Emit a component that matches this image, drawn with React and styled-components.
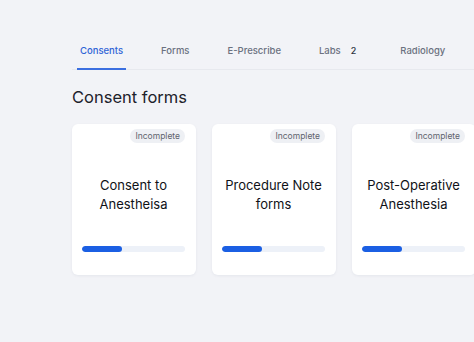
import styled, { createGlobalStyle } from "styled-components";

const GlobalStyle = createGlobalStyle`
  html, body {
    margin: 0;
    padding: 0;
    background: #f2f3f7;
    font-family: Inter, "Noto Sans", sans-serif;
    -webkit-font-smoothing: antialiased;
  }
`;

const Page = styled.div`
  width: 474px;
  height: 342px;
  box-sizing: border-box;
  padding: 36px 0 0 72px;
  overflow: hidden;
  background: #f2f3f7;
`;

const TabBar = styled.div`
  display: flex;
  align-items: flex-end;
  gap: 32px;
  padding-left: 5px;
  border-bottom: 1px solid #e7e9ee;
  width: 600px;
`;

const Tab = styled.div`
  display: flex;
  align-items: center;
  gap: 10px;
  padding: 8px 3px 10px;
  margin-bottom: -1px;
  font-size: 9.5px;
  line-height: 14px;
  font-weight: 500;
  color: ${(p) => (p.active ? "#2f63d6" : "#6b7180")};
  border-bottom: 2px solid ${(p) => (p.active ? "#3b6fe0" : "transparent")};
  white-space: nowrap;
`;

const Count = styled.span`
  padding-right: 6px;
  font-size: 9px;
  font-weight: 500;
  color: #2d3340;
`;

const Heading = styled.h2`
  margin: 16px 0 16px;
  font-size: 16.5px;
  line-height: 22px;
  font-weight: 400;
  color: #1d222b;
`;

const CardRow = styled.div`
  display: flex;
  gap: 16px;
`;

const Card = styled.div`
  flex: 0 0 124px;
  height: 151px;
  box-sizing: border-box;
  display: flex;
  flex-direction: column;
  padding: 5px 11px 0 10px;
  background: #fff;
  border-radius: 6px;
  box-shadow: 0 1px 3px rgba(20, 30, 60, 0.06);
`;

const Badge = styled.span`
  align-self: flex-end;
  padding: 0 5px;
  height: 14px;
  line-height: 14px;
  border-radius: 7px;
  background: #eef0f4;
  color: #5f646e;
  font-size: 8.5px;
  font-weight: 400;
`;

const Title = styled.div`
  margin-top: 33px;
  height: 38px;
  text-align: center;
  font-size: 13px;
  line-height: 19px;
  font-weight: 400;
  color: #0f1217;
`;

const Track = styled.div`
  margin-top: 32px;
  height: 6px;
  border-radius: 3px;
  background: #edf1f8;
  overflow: hidden;
`;

const Fill = styled.div`
  height: 100%;
  border-radius: 3px;
  background: #1b5fe3;
`;

const tabs = [
  { label: "Consents", active: true },
  { label: "Forms" },
  { label: "E-Prescribe" },
  { label: "Labs", count: 2 },
  { label: "Radiology" },
];

const forms = [
  { title: ["Consent to", "Anestheisa"], progress: 39 },
  { title: ["Procedure Note", "forms"], progress: 39 },
  { title: ["Post-Operative", "Anesthesia"], progress: 39 },
];

export default function App() {
  return (
    <Page>
      <GlobalStyle />
      <TabBar>
        {tabs.map((t) => (
          <Tab key={t.label} active={t.active}>
            {t.label}
            {t.count && <Count>{t.count}</Count>}
          </Tab>
        ))}
      </TabBar>
      <Heading>Consent forms</Heading>
      <CardRow>
        {forms.map((f) => (
          <Card key={f.title[0]}>
            <Badge>Incomplete</Badge>
            <Title>
              {f.title[0]}
              <br />
              {f.title[1]}
            </Title>
            <Track>
              <Fill style={{ width: `${f.progress}%` }} />
            </Track>
          </Card>
        ))}
      </CardRow>
    </Page>
  );
}
